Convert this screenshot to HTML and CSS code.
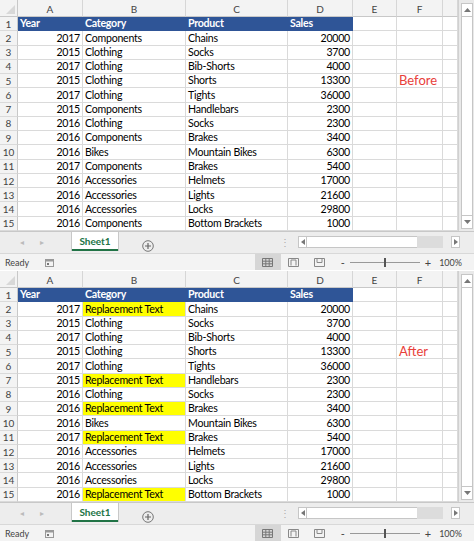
FILE: index.html
```html
<!DOCTYPE html>
<html>
<head>
<meta charset="utf-8">
<link rel="stylesheet" href="styles.css">
</head>
<body>
<div class="panel">
  <div class="sheetwrap">
    <div class="grid">
      <div class="corner"><span class="tri"></span></div><div class="ch">A</div><div class="ch">B</div><div class="ch">C</div><div class="ch">D</div><div class="ch">E</div><div class="ch">F</div><div class="ch"></div>
      <div class="r">1</div><div class="c h">Year</div><div class="c h">Category</div><div class="c h">Product</div><div class="c h">Sales</div><div class="c"></div><div class="c"></div><div class="c"></div>
      <div class="r">2</div><div class="c n">2017</div><div class="c">Components</div><div class="c">Chains</div><div class="c n">20000</div><div class="c"></div><div class="c"></div><div class="c"></div>
      <div class="r">3</div><div class="c n">2015</div><div class="c">Clothing</div><div class="c">Socks</div><div class="c n">3700</div><div class="c"></div><div class="c"></div><div class="c"></div>
      <div class="r">4</div><div class="c n">2017</div><div class="c">Clothing</div><div class="c">Bib-Shorts</div><div class="c n">4000</div><div class="c"></div><div class="c"></div><div class="c"></div>
      <div class="r">5</div><div class="c n">2015</div><div class="c">Clothing</div><div class="c">Shorts</div><div class="c n">13300</div><div class="c"></div><div class="c note">Before</div><div class="c"></div>
      <div class="r">6</div><div class="c n">2017</div><div class="c">Clothing</div><div class="c">Tights</div><div class="c n">36000</div><div class="c"></div><div class="c"></div><div class="c"></div>
      <div class="r">7</div><div class="c n">2015</div><div class="c">Components</div><div class="c">Handlebars</div><div class="c n">2300</div><div class="c"></div><div class="c"></div><div class="c"></div>
      <div class="r">8</div><div class="c n">2016</div><div class="c">Clothing</div><div class="c">Socks</div><div class="c n">2300</div><div class="c"></div><div class="c"></div><div class="c"></div>
      <div class="r">9</div><div class="c n">2016</div><div class="c">Components</div><div class="c">Brakes</div><div class="c n">3400</div><div class="c"></div><div class="c"></div><div class="c"></div>
      <div class="r">10</div><div class="c n">2016</div><div class="c">Bikes</div><div class="c">Mountain Bikes</div><div class="c n">6300</div><div class="c"></div><div class="c"></div><div class="c"></div>
      <div class="r">11</div><div class="c n">2017</div><div class="c">Components</div><div class="c">Brakes</div><div class="c n">5400</div><div class="c"></div><div class="c"></div><div class="c"></div>
      <div class="r">12</div><div class="c n">2016</div><div class="c">Accessories</div><div class="c">Helmets</div><div class="c n">17000</div><div class="c"></div><div class="c"></div><div class="c"></div>
      <div class="r">13</div><div class="c n">2016</div><div class="c">Accessories</div><div class="c">Lights</div><div class="c n">21600</div><div class="c"></div><div class="c"></div><div class="c"></div>
      <div class="r">14</div><div class="c n">2016</div><div class="c">Accessories</div><div class="c">Locks</div><div class="c n">29800</div><div class="c"></div><div class="c"></div><div class="c"></div>
      <div class="r">15</div><div class="c n">2016</div><div class="c">Components</div><div class="c">Bottom Brackets</div><div class="c n">1000</div><div class="c"></div><div class="c"></div><div class="c"></div>
    </div>
    <div class="vscroll">
      <div class="vbtn"><svg width="7" height="4" viewBox="0 0 7 4"><path d="M0 4 L3.5 0 L7 4Z" fill="#777"/></svg></div>
      <div class="vthumb"></div>
      <div class="vbtn"><svg width="7" height="4" viewBox="0 0 7 4"><path d="M0 0 L3.5 4 L7 0Z" fill="#777"/></svg></div>
    </div>
  </div>
  <div class="tabbar">
    <span class="nav">&#9666;</span><span class="nav">&#9656;</span>
    <div class="tab">Sheet1</div>
    <div class="addsheet"><svg width="12" height="12" viewBox="0 0 12 12"><circle cx="6" cy="6" r="5.3" fill="none" stroke="#777" stroke-width="1"/><path d="M6 3v6M3 6h6" stroke="#666" stroke-width="1.2"/></svg></div>
    <div class="split">&#8942;</div>
    <div class="hscroll">
      <div class="hbtn"><svg width="4" height="6" viewBox="0 0 4 6"><path d="M4 0 L0 3 L4 6Z" fill="#777"/></svg></div>
      <div class="hthumb"></div>
      <div class="htrack"></div>
      <div class="hbtn"><svg width="4" height="6" viewBox="0 0 4 6"><path d="M0 0 L4 3 L0 6Z" fill="#777"/></svg></div>
    </div>
  </div>
  <div class="status">
    <span class="ready">Ready</span>
    <span class="macro"><svg width="9" height="9" viewBox="0 0 9 9"><rect x="0.5" y="1.5" width="8" height="7" fill="none" stroke="#999"/><rect x="0.5" y="1.5" width="8" height="2" fill="#999"/><rect x="2" y="5" width="2" height="2" fill="#777"/></svg></span>
    <span class="spacer"></span>
    <span class="view on"><svg width="11" height="9" viewBox="0 0 11 9"><path d="M0.5 0.5h10v8h-10z M0.5 3.2h10 M0.5 5.8h10 M3.8 0.5v8 M7.2 0.5v8" fill="none" stroke="#777"/></svg></span>
    <span class="view"><svg width="11" height="9" viewBox="0 0 11 9"><path d="M0.5 0.5h10v8h-10z M3 2v5.5 M8 2v5.5 M3 2h5" fill="none" stroke="#888"/></svg></span>
    <span class="view"><svg width="11" height="9" viewBox="0 0 11 9"><path d="M0.5 0.5h10v8h-10z M3 0.5v4h5v-4" fill="none" stroke="#888"/></svg></span>
    <span class="zm">-</span>
    <span class="slider"><span class="sthumb"></span></span>
    <span class="zp">+</span>
    <span class="pct">100%</span>
  </div>
</div>
<div class="panel second">
  <div class="sheetwrap">
    <div class="grid">
      <div class="corner"><span class="tri"></span></div><div class="ch">A</div><div class="ch">B</div><div class="ch">C</div><div class="ch">D</div><div class="ch">E</div><div class="ch">F</div><div class="ch"></div>
      <div class="r">1</div><div class="c h">Year</div><div class="c h">Category</div><div class="c h">Product</div><div class="c h">Sales</div><div class="c"></div><div class="c"></div><div class="c"></div>
      <div class="r">2</div><div class="c n">2017</div><div class="c y">Replacement Text</div><div class="c">Chains</div><div class="c n">20000</div><div class="c"></div><div class="c"></div><div class="c"></div>
      <div class="r">3</div><div class="c n">2015</div><div class="c">Clothing</div><div class="c">Socks</div><div class="c n">3700</div><div class="c"></div><div class="c"></div><div class="c"></div>
      <div class="r">4</div><div class="c n">2017</div><div class="c">Clothing</div><div class="c">Bib-Shorts</div><div class="c n">4000</div><div class="c"></div><div class="c"></div><div class="c"></div>
      <div class="r">5</div><div class="c n">2015</div><div class="c">Clothing</div><div class="c">Shorts</div><div class="c n">13300</div><div class="c"></div><div class="c note">After</div><div class="c"></div>
      <div class="r">6</div><div class="c n">2017</div><div class="c">Clothing</div><div class="c">Tights</div><div class="c n">36000</div><div class="c"></div><div class="c"></div><div class="c"></div>
      <div class="r">7</div><div class="c n">2015</div><div class="c y">Replacement Text</div><div class="c">Handlebars</div><div class="c n">2300</div><div class="c"></div><div class="c"></div><div class="c"></div>
      <div class="r">8</div><div class="c n">2016</div><div class="c">Clothing</div><div class="c">Socks</div><div class="c n">2300</div><div class="c"></div><div class="c"></div><div class="c"></div>
      <div class="r">9</div><div class="c n">2016</div><div class="c y">Replacement Text</div><div class="c">Brakes</div><div class="c n">3400</div><div class="c"></div><div class="c"></div><div class="c"></div>
      <div class="r">10</div><div class="c n">2016</div><div class="c">Bikes</div><div class="c">Mountain Bikes</div><div class="c n">6300</div><div class="c"></div><div class="c"></div><div class="c"></div>
      <div class="r">11</div><div class="c n">2017</div><div class="c y">Replacement Text</div><div class="c">Brakes</div><div class="c n">5400</div><div class="c"></div><div class="c"></div><div class="c"></div>
      <div class="r">12</div><div class="c n">2016</div><div class="c">Accessories</div><div class="c">Helmets</div><div class="c n">17000</div><div class="c"></div><div class="c"></div><div class="c"></div>
      <div class="r">13</div><div class="c n">2016</div><div class="c">Accessories</div><div class="c">Lights</div><div class="c n">21600</div><div class="c"></div><div class="c"></div><div class="c"></div>
      <div class="r">14</div><div class="c n">2016</div><div class="c">Accessories</div><div class="c">Locks</div><div class="c n">29800</div><div class="c"></div><div class="c"></div><div class="c"></div>
      <div class="r">15</div><div class="c n">2016</div><div class="c y">Replacement Text</div><div class="c">Bottom Brackets</div><div class="c n">1000</div><div class="c"></div><div class="c"></div><div class="c"></div>
    </div>
    <div class="vscroll">
      <div class="vbtn"><svg width="7" height="4" viewBox="0 0 7 4"><path d="M0 4 L3.5 0 L7 4Z" fill="#777"/></svg></div>
      <div class="vthumb"></div>
      <div class="vbtn"><svg width="7" height="4" viewBox="0 0 7 4"><path d="M0 0 L3.5 4 L7 0Z" fill="#777"/></svg></div>
    </div>
  </div>
  <div class="tabbar">
    <span class="nav">&#9666;</span><span class="nav">&#9656;</span>
    <div class="tab">Sheet1</div>
    <div class="addsheet"><svg width="12" height="12" viewBox="0 0 12 12"><circle cx="6" cy="6" r="5.3" fill="none" stroke="#777" stroke-width="1"/><path d="M6 3v6M3 6h6" stroke="#666" stroke-width="1.2"/></svg></div>
    <div class="split">&#8942;</div>
    <div class="hscroll">
      <div class="hbtn"><svg width="4" height="6" viewBox="0 0 4 6"><path d="M4 0 L0 3 L4 6Z" fill="#777"/></svg></div>
      <div class="hthumb"></div>
      <div class="htrack"></div>
      <div class="hbtn"><svg width="4" height="6" viewBox="0 0 4 6"><path d="M0 0 L4 3 L0 6Z" fill="#777"/></svg></div>
    </div>
  </div>
  <div class="status">
    <span class="ready">Ready</span>
    <span class="macro"><svg width="9" height="9" viewBox="0 0 9 9"><rect x="0.5" y="1.5" width="8" height="7" fill="none" stroke="#999"/><rect x="0.5" y="1.5" width="8" height="2" fill="#999"/><rect x="2" y="5" width="2" height="2" fill="#777"/></svg></span>
    <span class="spacer"></span>
    <span class="view on"><svg width="11" height="9" viewBox="0 0 11 9"><path d="M0.5 0.5h10v8h-10z M0.5 3.2h10 M0.5 5.8h10 M3.8 0.5v8 M7.2 0.5v8" fill="none" stroke="#777"/></svg></span>
    <span class="view"><svg width="11" height="9" viewBox="0 0 11 9"><path d="M0.5 0.5h10v8h-10z M3 2v5.5 M8 2v5.5 M3 2h5" fill="none" stroke="#888"/></svg></span>
    <span class="view"><svg width="11" height="9" viewBox="0 0 11 9"><path d="M0.5 0.5h10v8h-10z M3 0.5v4h5v-4" fill="none" stroke="#888"/></svg></span>
    <span class="zm">-</span>
    <span class="slider"><span class="sthumb"></span></span>
    <span class="zp">+</span>
    <span class="pct">100%</span>
  </div>
</div>
</body>
</html>
```
FILE: styles.css
```css
html, body { margin: 0; padding: 0; background: #fff; }
body { width: 474px; font-family: Lato, "Liberation Sans", sans-serif; }
.panel { height: 270px; display: flex; flex-direction: column; overflow: hidden; }
.second { margin-top: 1px; }
.sheetwrap { display: flex; height: 231px; flex: none; }
.grid {
  display: grid;
  grid-template-columns: 18px 65px 103px 102px 65px 44px 46px 15px;
  grid-template-rows: 17px repeat(15, 14.27px);
  width: 458px;
  height: 231px;
}
.corner { background: #f3f3f3; border-right: 1px solid #c8c8c8; border-bottom: 1px solid #c8c8c8; position: relative; }
.tri { position: absolute; right: 2px; bottom: 2px; width: 0; height: 0; border-left: 9px solid transparent; border-bottom: 9px solid #d8d8d8; }
.ch { background: #f3f3f3; color: #444; font-size: 10px; display: flex; align-items: center; justify-content: center; border-right: 1px solid #d6d6d6; border-bottom: 1px solid #c8c8c8; padding-top: 2px; }
.r { background: #f3f3f3; color: #444; font-size: 10px; line-height: 1; min-height: 0; display: flex; align-items: center; justify-content: center; border-right: 1px solid #c8c8c8; border-bottom: 1px solid #dadada; }
.c { font-size: 10.6px; letter-spacing: -0.25px; line-height: 1; min-height: 0; color: #000; border-right: 1px solid #dadada; border-bottom: 1px solid #dadada; display: flex; align-items: center; padding: 0 2px; white-space: nowrap; overflow: visible; }
.n { justify-content: flex-end; }
.h { background: #2f5597; color: #fff; font-weight: bold; border-right-color: #2f5597; border-bottom-color: #2f5597; }
.y { background: #ffff00; }
.note { color: #e8403a; font-size: 13px; letter-spacing: 0; }
.vscroll { width: 16px; height: 231px; background: #e9e9e9; border-left: 1px solid #d0d0d0; box-sizing: border-box; display: flex; flex-direction: column; padding: 3px 1px 2px 2px; }
.vbtn { height: 12px; background: #fff; border: 1px solid #c6c6c6; display: flex; align-items: center; justify-content: center; }
.vthumb { flex: 1; background: #fff; border-left: 1px solid #c6c6c6; border-right: 1px solid #c6c6c6; }
.tabbar { height: 22px; flex: none; background: #ededed; display: flex; align-items: flex-start; border-top: 1px solid #c8c8c8; box-sizing: border-box; }
.nav { color: #bbb; font-size: 8px; width: 20px; text-align: center; line-height: 20px; }
.nav:first-child { margin-left: 12px; }
.tab { margin-left: 20px; width: 46px; height: 19px; background: #fff; color: #217346; font-weight: bold; font-size: 10px; display: flex; align-items: center; justify-content: center; border-bottom: 2px solid #217346; box-sizing: border-box; box-shadow: 1px 0 0 #c8c8c8, -1px 0 0 #c8c8c8; }
.addsheet { margin-left: 24px; margin-top: 4px; }
.split { margin-left: 126px; color: #aaa; font-size: 10px; line-height: 20px; }
.hscroll { margin-left: 8px; margin-top: 4px; display: flex; height: 12px; width: 162px; }
.hbtn { width: 9px; height: 12px; background: #fff; border: 1px solid #c6c6c6; box-sizing: border-box; display: flex; align-items: center; justify-content: center; }
.hthumb { width: 110px; background: #fff; border-top: 1px solid #c6c6c6; border-bottom: 1px solid #c6c6c6; box-sizing: border-box; }
.htrack { flex: 1; background: #dcdcdc; margin-right: 8px; }
.status { height: 17px; flex: none; background: #f3f3f3; border-top: 1px solid #d8d8d8; display: flex; align-items: center; font-size: 9px; color: #444; box-sizing: border-box; }
.ready { margin-left: 5px; }
.macro { margin-left: 16px; display: flex; }
.spacer { flex: 1; }
.view { width: 26px; height: 16px; display: flex; align-items: center; justify-content: center; }
.view.on { background: #d6d6d6; }
.zm { margin-left: 8px; font-size: 11px; }
.slider { width: 70px; height: 1px; background: #999; margin-left: 5px; position: relative; }
.sthumb { position: absolute; left: 34px; top: -4px; width: 2px; height: 9px; background: #555; }
.zp { margin-left: 5px; font-size: 11px; }
.pct { margin-left: 8px; margin-right: 12px; }
```
